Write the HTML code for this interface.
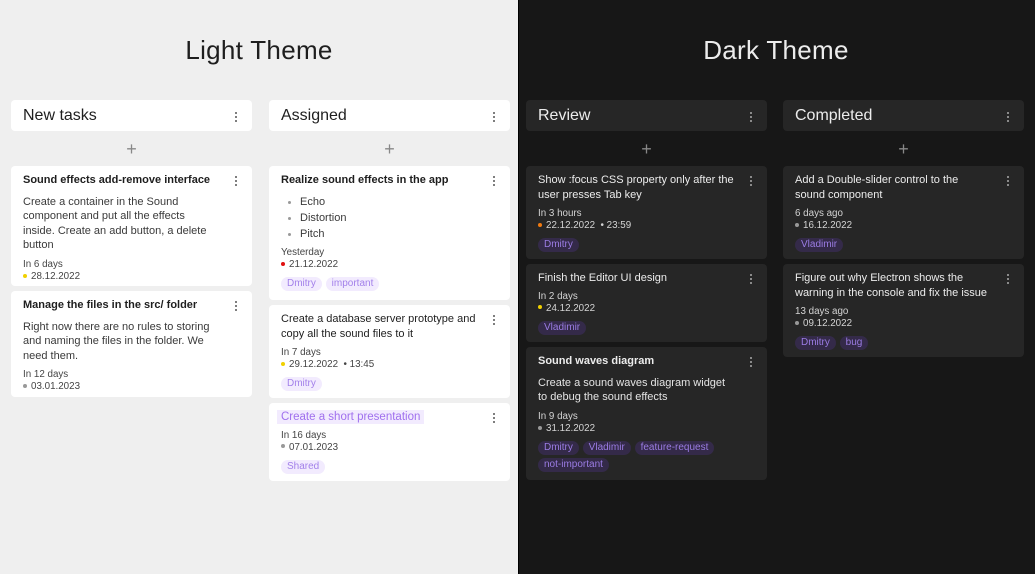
<!DOCTYPE html><html><head><style>
*{margin:0;padding:0;box-sizing:border-box}
body{width:1035px;height:574px;overflow:hidden;font-family:"Liberation Sans",sans-serif;position:relative}
.half{position:absolute;top:0;height:574px}
.l{left:0;width:518px;background:#efefef;color:#1e1e1e}
.d{left:518px;width:517px;background:#171717;color:#ececec;border-left:1px solid #000}
h1{position:absolute;top:35px;width:100%;text-align:center;font-weight:normal;font-size:26px;letter-spacing:.3px}
.col{position:absolute;top:100px;width:241px}
.hd{height:31px;border-radius:4px;padding:0 12px;font-size:16px;line-height:32px;position:relative}
.plus{height:35px;text-align:center;font-size:18px;line-height:37px;font-weight:300}
.card{border-radius:4px;padding:7px 12px 5px;margin-bottom:5px;position:relative}
.dots{position:absolute;right:15px;top:10px;width:2px}
.dots i{display:block;width:2px;height:2px;border-radius:1px;margin-bottom:2px}
.hd .dots{top:12px}
.t{font-size:11px;font-weight:bold;line-height:14.5px;white-space:nowrap}
.tn{font-weight:normal}
.b{font-size:11px;line-height:14.6px;margin-top:7px;white-space:nowrap}
.due{font-size:9.8px;line-height:12px;margin-top:6px}
.dt{font-size:9.8px;line-height:12px}
.dot{display:inline-block;width:4px;height:4px;border-radius:2px;margin:0 4px 1px 0;vertical-align:middle}
.tags{margin-top:6px;font-size:10px;line-height:14px}
.tag{display:inline-block;padding:0 6px;border-radius:7px;margin:0 1px 3px 0}
ul{list-style:none;margin-top:6px;font-size:11px;line-height:16.4px}
li{padding-left:19px;position:relative}
li:before{content:"";position:absolute;left:7px;top:7px;width:3px;height:3px;border-radius:2px;background:#999}
.l .hd,.l .card{background:#fff}
.l .dots i{background:#555}.l .plus{color:#888}
.l .b,.l ul{color:#3a3a3a}.l .due,.l .dt{color:#444}
.l .tag{background:#f2ebfe;color:#a381ea}
.d .hd,.d .card{background:#262626}
.d .dots i{background:#aaa}.d .plus{color:#888}
.d .b{color:#e4e4e4}.d .due,.d .dt{color:#d4d4d4}
.d .tag{background:#342a49;color:#9b7ce4}
.y{background:#f0d000}.r{background:#e01010}.g{background:#999}.o{background:#f07a10}
</style></head><body>
<div class="half l"><h1>Light Theme</h1>
<div class="col" style="left:11px">
<div class="hd">New tasks<div class="dots"><i></i><i></i><i></i></div></div><div class="plus">+</div>
<div class="card" style="height:120px"><div class="t">Sound effects add-remove interface</div><div class="dots"><i></i><i></i><i></i></div><div class="b">Create a container in the Sound<br>component and put all the effects<br>inside. Create an add button, a delete<br>button</div><div class="due">In 6 days</div><div class="dt"><span class="dot y"></span>28.12.2022</div></div>
<div class="card" style="height:106px"><div class="t">Manage the files in the src/ folder</div><div class="dots"><i></i><i></i><i></i></div><div class="b">Right now there are no rules to storing<br>and naming the files in the folder. We<br>need them.</div><div class="due">In 12 days</div><div class="dt"><span class="dot g"></span>03.01.2023</div></div>
</div>
<div class="col" style="left:269px">
<div class="hd">Assigned<div class="dots"><i></i><i></i><i></i></div></div><div class="plus">+</div>
<div class="card" style="height:134px"><div class="t">Realize sound effects in the app</div><div class="dots"><i></i><i></i><i></i></div><ul><li>Echo</li><li>Distortion</li><li>Pitch</li></ul><div class="due" style="margin-top:4px">Yesterday</div><div class="dt"><span class="dot r"></span>21.12.2022</div><div class="tags"><span class="tag">Dmitry</span> <span class="tag">important</span></div></div>
<div class="card" style="height:93px"><div class="t tn">Create a database server prototype and<br>copy all the sound files to it</div><div class="dots"><i></i><i></i><i></i></div><div class="due">In 7 days</div><div class="dt"><span class="dot y"></span>29.12.2022 &nbsp;•&nbsp;13:45</div><div class="tags"><span class="tag">Dmitry</span></div></div>
<div class="card" style="height:78px"><div class="t tn"><span style="background:#f2ebfe;color:#a070ee;padding:1px 4px;margin-left:-4px;font-size:11.5px">Create a short presentation</span></div><div class="dots"><i></i><i></i><i></i></div><div class="due" style="margin-top:5px">In 16 days</div><div class="dt"><span class="dot g"></span>07.01.2023</div><div class="tags"><span class="tag">Shared</span></div></div>
</div></div>
<div class="half d"><h1 style="left:-1px">Dark Theme</h1>
<div class="col" style="left:7px">
<div class="hd">Review<div class="dots"><i></i><i></i><i></i></div></div><div class="plus">+</div>
<div class="card" style="height:93px"><div class="t tn">Show :focus CSS property only after the<br>user presses Tab key</div><div class="dots"><i></i><i></i><i></i></div><div class="due">In 3 hours</div><div class="dt"><span class="dot o"></span>22.12.2022 &nbsp;•&nbsp;23:59</div><div class="tags"><span class="tag">Dmitry</span></div></div>
<div class="card" style="height:78px"><div class="t tn">Finish the Editor UI design</div><div class="dots"><i></i><i></i><i></i></div><div class="due" style="margin-top:5px">In 2 days</div><div class="dt"><span class="dot y"></span>24.12.2022</div><div class="tags"><span class="tag">Vladimir</span></div></div>
<div class="card" style="height:133px"><div class="t">Sound waves diagram</div><div class="dots"><i></i><i></i><i></i></div><div class="b">Create a sound waves diagram widget<br>to debug the sound effects</div><div class="due">In 9 days</div><div class="dt"><span class="dot g"></span>31.12.2022</div><div class="tags"><span class="tag">Dmitry</span> <span class="tag">Vladimir</span> <span class="tag">feature-request</span> <span class="tag">not-important</span></div></div>
</div>
<div class="col" style="left:264px">
<div class="hd">Completed<div class="dots"><i></i><i></i><i></i></div></div><div class="plus">+</div>
<div class="card" style="height:93px"><div class="t tn">Add a Double-slider control to the<br>sound component</div><div class="dots"><i></i><i></i><i></i></div><div class="due">6 days ago</div><div class="dt"><span class="dot g"></span>16.12.2022</div><div class="tags"><span class="tag">Vladimir</span></div></div>
<div class="card" style="height:93px"><div class="t tn">Figure out why Electron shows the<br>warning in the console and fix the issue</div><div class="dots"><i></i><i></i><i></i></div><div class="due">13 days ago</div><div class="dt"><span class="dot g"></span>09.12.2022</div><div class="tags"><span class="tag">Dmitry</span> <span class="tag">bug</span></div></div>
</div></div>
</body></html>
